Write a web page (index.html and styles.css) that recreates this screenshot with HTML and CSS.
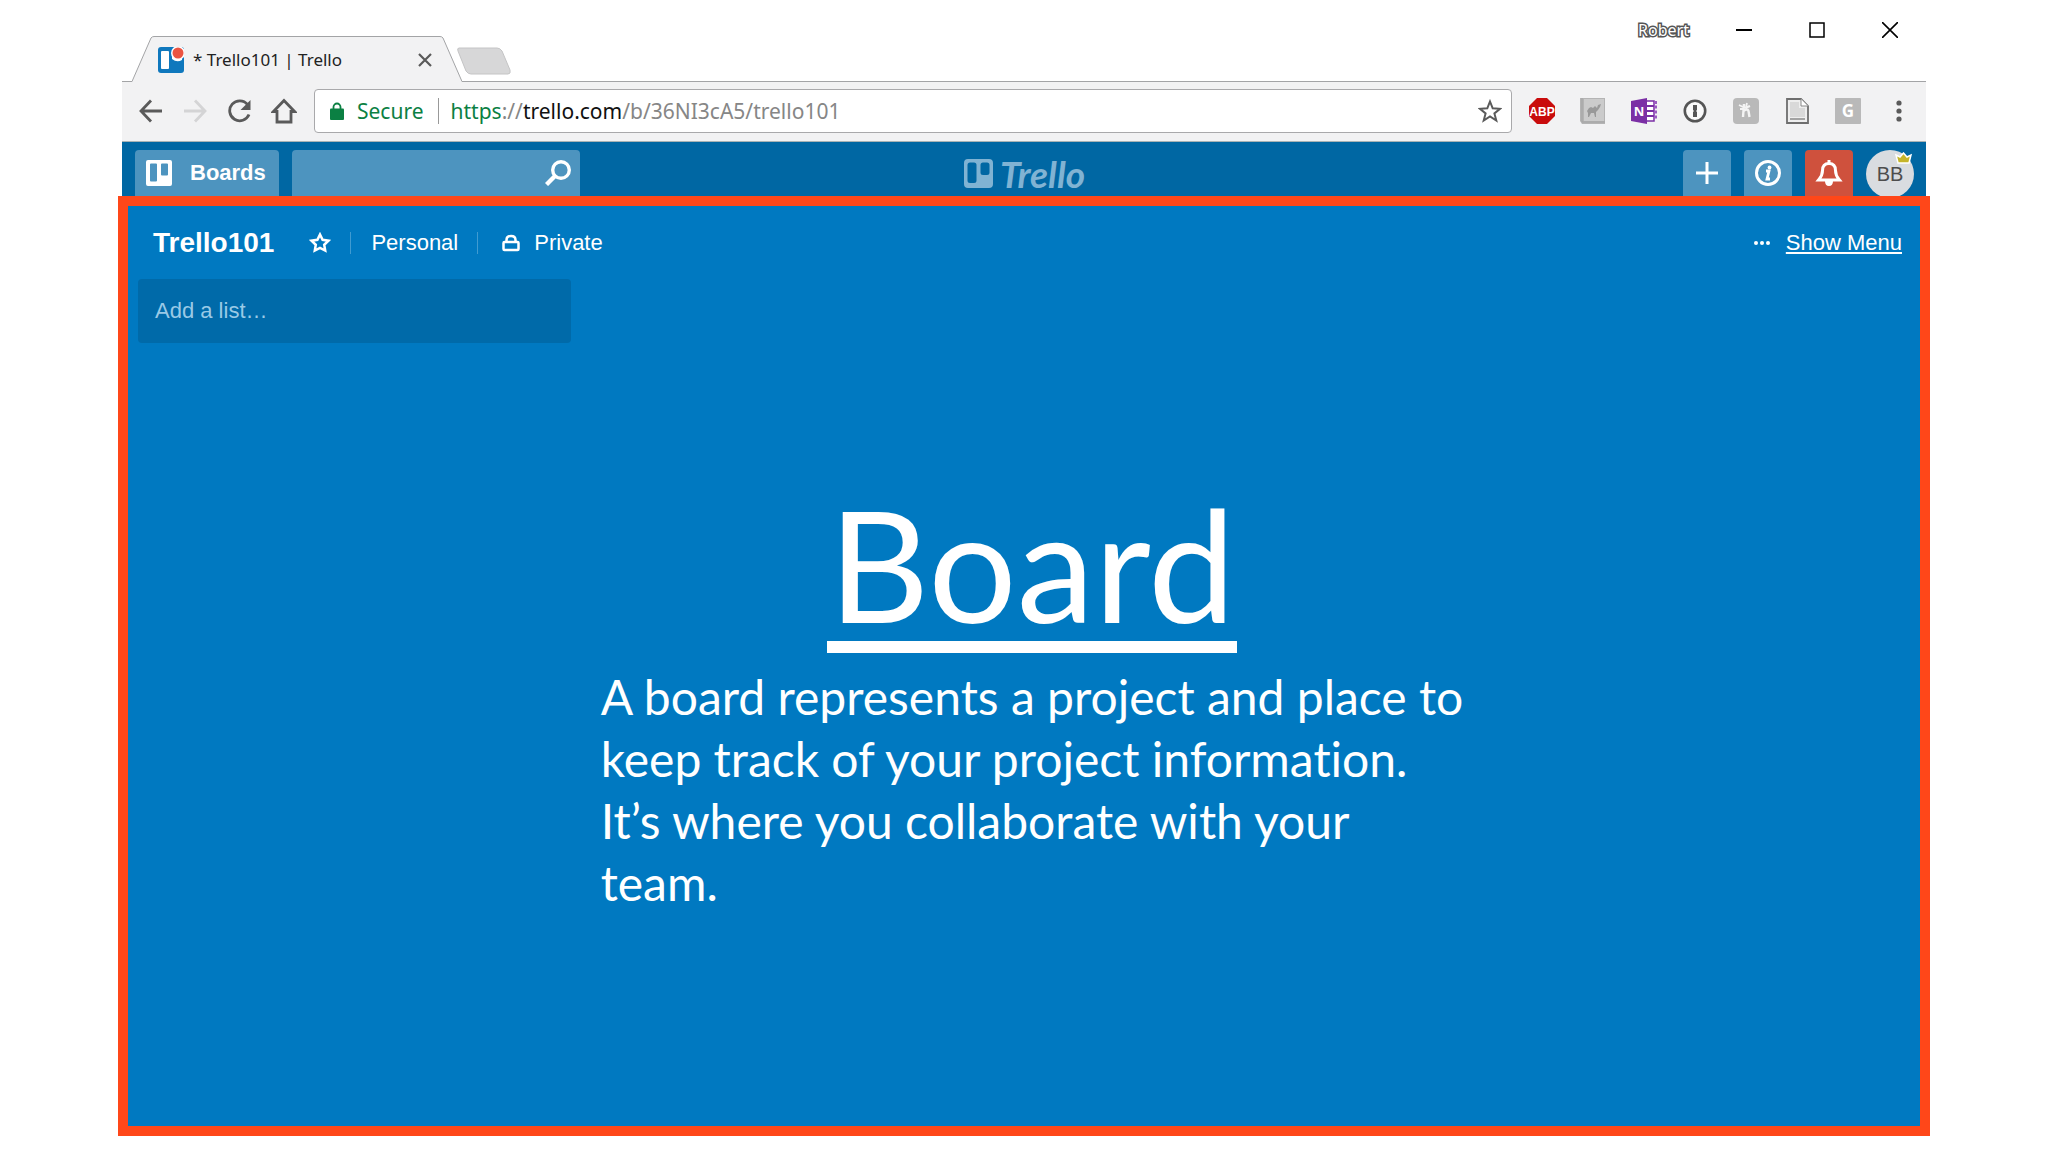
FILE: index.html
```
<!DOCTYPE html>
<html lang="en">

<head>
    <meta charset="UTF-8" />
    <meta name="viewport" content="width=device-width, initial-scale=1" />
    <title>Trello101 | Trello</title>
    <link rel="stylesheet" href="styles.css">
</head>

<body>
    <div class="browser">
        <div class="titlebar">
            <div class="tab">
                <svg class="tab-edge" width="22" height="46" viewBox="0 0 22 46">
                    <path d="M0 46V45.500L19 2Q20 .5 22 .5V46z" fill="#f2f2f3" />
                    <path d="M0 45.500L19 2Q20 .5 22 .5" fill="none" stroke="#a3a4a6" />
                </svg>
                <div class="tab-body">
                    <svg width="26" height="26" viewBox="0 0 26 26">
                        <rect width="26" height="26" rx="3" fill="#0f78bd" />
                        <rect x="3" y="4" width="8" height="18" rx="1" fill="#fff" />
                        <path d="M14 4h10v9q-5 3-10-1z" fill="#fff" />
                        <circle cx="20" cy="6" r="7" fill="#fff" />
                        <circle cx="20" cy="6" r="5.500" fill="#eb5442" />
                    </svg>
                    <span class="tab-title">* Trello101 | Trello</span>
                    <button class="icon-button" aria-label="Close tab">
                        <svg width="14" height="14" viewBox="0 0 14 14">
                            <path d="M1 1l12 12M13 1L1 13" stroke="#5a5a5a" stroke-width="2.200" />
                        </svg>
                    </button>
                </div>
                <svg class="tab-edge" width="22" height="46" viewBox="0 0 22 46">
                    <path d="M22 46V45.500L3 2Q2 .5 0 .5V46z" fill="#f2f2f3" />
                    <path d="M22 45.500L3 2Q2 .5 0 .5" fill="none" stroke="#a3a4a6" />
                </svg>
            </div>
            <button class="icon-button new-tab" aria-label="New tab">
                <svg width="56" height="28" viewBox="0 0 56 28">
                    <path d="M3 1h38q3 0 5 3l8 19q1 4-2 4H15q-3 0-5-3L2 4q-1-3 1-3z" fill="#d7d7d8" stroke="#c4c4c5" />
                </svg>
            </button>
            <div class="window-controls">
                <span class="profile">Robert</span>
                <button aria-label="Minimize">
                    <svg width="16" height="16" viewBox="0 0 16 16"><path d="M0 8h16" stroke="#000" stroke-width="2" /></svg>
                </button>
                <button aria-label="Maximize">
                    <svg width="16" height="16" viewBox="0 0 16 16"><path d="M1 1h14v14H1z" fill="none" stroke="#000" stroke-width="1.500" /></svg>
                </button>
                <button aria-label="Close">
                    <svg width="16" height="16" viewBox="0 0 16 16"><path d="M0 0l16 16M16 0L0 16" stroke="#000" stroke-width="1.600" /></svg>
                </button>
            </div>
        </div>

        <div class="toolbar">
            <div class="nav">
                <button class="icon-button" aria-label="Back">
                    <svg width="24" height="24" viewBox="0 0 24 24"><path d="M23 12H2.500M12 1.500L2 12l10 10.500" fill="none" stroke="#5a5a5a" stroke-width="2.800" /></svg>
                </button>
                <button class="icon-button" aria-label="Forward">
                    <svg width="24" height="24" viewBox="0 0 24 24"><path d="M1 12h20.500M12 1.500L22 12 12 22.500" fill="none" stroke="#d4d4d5" stroke-width="2.800" /></svg>
                </button>
                <button class="icon-button" aria-label="Reload">
                    <svg width="24" height="24" viewBox="0 0 24 24">
                        <path d="M20.500 5.500A10 10 0 1 0 22 15.500" fill="none" stroke="#5a5a5a" stroke-width="2.800" />
                        <path d="M23.500 1v10h-10z" fill="#5a5a5a" />
                    </svg>
                </button>
                <button class="icon-button" aria-label="Home">
                    <svg width="26" height="26" viewBox="0 0 26 26"><path d="M13 2.500L2.500 13.500H6V24h14V13.500h3.500z" fill="none" stroke="#5a5a5a" stroke-width="2.800" /></svg>
                </button>
            </div>
            <div class="omnibox">
                <svg width="14" height="18" viewBox="0 0 14 18">
                    <path d="M3.500 8V5a3.500 3.500 0 0 1 7 0v3" fill="none" stroke="#0b8043" stroke-width="1.800" />
                    <rect y="6.500" width="14" height="11.500" rx="1" fill="#0b8043" />
                </svg>
                <span class="secure">Secure</span>
                <span class="divider"></span>
                <div class="url" role="textbox" aria-label="Address" contenteditable="true" spellcheck="false"><span class="scheme">https</span>://<span class="host">trello.com</span>/b/36NI3cA5/trello101</div>
                <button class="icon-button" aria-label="Bookmark this page">
                    <svg width="24" height="24" viewBox="0 0 24 24"><path d="M12 2.500l2.700 6.800 7.300.5-5.600 4.600 1.900 7.100L12 17.500l-6.300 4 1.900-7.100L2 9.800l7.300-.5z" fill="none" stroke="#5a5a5a" stroke-width="2" /></svg>
                </button>
            </div>
            <div class="extensions">
                <button class="icon-button" aria-label="Adblock Plus">
                    <svg width="26" height="26" viewBox="0 0 26 26">
                        <path d="M8 0h10l8 8v10l-8 8H8l-8-8V8z" fill="#c90c0c" />
                        <text x="13" y="18" class="abp">ABP</text>
                    </svg>
                </button>
                <button class="icon-button" aria-label="Camel">
                    <svg width="26" height="26" viewBox="0 0 26 26">
                        <path d="M0 0h25v26H2L0 23z" fill="#b4b4b4" />
                        <path d="M4 1h20v22H4z" fill="#cbcbcb" />
                        <path d="M2 0v24h23" fill="none" stroke="#a4a4a4" />
                        <path d="M8 19v-4l-1-2 2-3 2-1 2 1 2-2 2 2 1-3 3-1-1 3-2 3-2 2v5h-1l-1-4h-3l-2 4z" fill="#999" />
                    </svg>
                </button>
                <button class="icon-button" aria-label="OneNote">
                    <svg width="26" height="26" viewBox="0 0 26 26">
                        <path d="M14 3h9v20h-9" fill="#fff" stroke="#7b2fa5" stroke-width="1.500" />
                        <path d="M16 8h7M16 13h7M16 18h7" stroke="#7b2fa5" stroke-width="2" />
                        <path d="M23 4.500h3M23 9h3M23 14h3M23 19h3" stroke="#9b5cc0" stroke-width="3" />
                        <path d="M0 3l16-3v26L0 23z" fill="#7b2fa5" />
                        <text x="8" y="18" class="onenote">N</text>
                    </svg>
                </button>
                <button class="icon-button" aria-label="1Password">
                    <svg width="26" height="26" viewBox="0 0 26 26">
                        <circle cx="13" cy="13" r="10.200" fill="#fafafa" stroke="#555" stroke-width="2.600" />
                        <path d="M11 7h4v5l-1 1 1 1v5h-4v-5l1-1-1-1z" fill="#555" />
                    </svg>
                </button>
                <button class="icon-button" aria-label="Honey">
                    <svg width="26" height="26" viewBox="0 0 26 26">
                        <rect width="26" height="26" rx="4" fill="#b9b9b9" />
                        <path d="M11 6l-1 13M10.500 13q4-3 5 0l1 6M12 10l5-2" fill="none" stroke="#f4f4f4" stroke-width="2.400" />
                        <path d="M6 7l4 2M14 5l-1 4M7 11h3" stroke="#f4f4f4" stroke-width="1.800" />
                    </svg>
                </button>
                <button class="icon-button" aria-label="Page notes">
                    <svg width="26" height="26" viewBox="0 0 26 26">
                        <path d="M3 1h14l7 7v17H3z" fill="#eee" stroke="#6e6e6e" stroke-width="1.800" />
                        <path d="M17 1v7h7" fill="#fff" stroke="#8a8a8a" />
                        <path d="M6 4h9v6h6v9H6z" fill="#d9d9d9" />
                        <path d="M6 21h15" stroke="#8a8a8a" stroke-width="1.500" />
                    </svg>
                </button>
                <button class="icon-button" aria-label="Grammarly">
                    <svg width="26" height="26" viewBox="0 0 26 26">
                        <rect width="26" height="26" rx="1" fill="#b9b9b9" />
                        <text x="13" y="19" class="grammarly">G</text>
                    </svg>
                </button>
                <button class="icon-button" aria-label="Menu">
                    <svg width="26" height="26" viewBox="0 0 26 26" fill="#5a5a5a">
                        <circle cx="13" cy="5" r="2.600" />
                        <circle cx="13" cy="13" r="2.600" />
                        <circle cx="13" cy="21" r="2.600" />
                    </svg>
                </button>
            </div>
        </div>

        <header class="header">
            <div class="header-left">
                <button class="header-button boards">
                    <svg width="26" height="26" viewBox="0 0 26 26">
                        <path fill-rule="evenodd" d="M2 0h22q2 0 2 2v22q0 2-2 2H2q-2 0-2-2V2q0-2 2-2zM5 3.500q-1 0-1 1v16q0 1 1 1h5q1 0 1-1v-16q0-1-1-1zM16 3.500q-1 0-1 1v10q0 1 1 1h5q1 0 1-1v-10q0-1-1-1z" fill="#fff" />
                    </svg>
                    Boards
                </button>
                <div class="search">
                    <input type="text" aria-label="Search">
                    <button class="icon-button" aria-label="Search">
                        <svg width="26" height="26" viewBox="0 0 26 26" fill="none" stroke="#fff">
                            <circle cx="16" cy="10" r="8.300" stroke-width="3.400" />
                            <path d="M10 16l-8.500 8.500" stroke-width="4.400" />
                        </svg>
                    </button>
                </div>
            </div>
            <a class="logo" href="#">
                <svg width="29" height="29" viewBox="0 0 29 29">
                    <path fill-rule="evenodd" d="M4 0h21q4 0 4 4v21q0 4-4 4H4q-4 0-4-4V4q0-4 4-4zM6 3.500q-2.500 0-2.500 2.500v15.500q0 2.500 2.500 2.500h4q2.500 0 2.500-2.500V6q0-2.500-2.500-2.500zM19 3.500q-2.500 0-2.500 2.500v7.500q0 2.500 2.500 2.500h4q2.500 0 2.500-2.500V6q0-2.500-2.500-2.500z" fill="#80b3d3" />
                </svg>
                <span>Trello</span>
            </a>
            <div class="header-right">
                <button class="header-button square" aria-label="Add">
                    <svg width="24" height="24" viewBox="0 0 24 24"><path d="M12 1v22M1 12h22" stroke="#fff" stroke-width="3" /></svg>
                </button>
                <button class="header-button square" aria-label="Information">
                    <svg width="28" height="28" viewBox="0 0 28 28">
                        <circle cx="14" cy="14" r="11.500" fill="none" stroke="#fff" stroke-width="3" />
                        <path d="M12 12h3l-2 8h3" fill="none" stroke="#fff" stroke-width="2.800" />
                        <circle cx="15.500" cy="8.500" r="1.900" fill="#fff" />
                    </svg>
                </button>
                <button class="header-button square alert" aria-label="Notifications">
                    <svg width="28" height="28" viewBox="0 0 28 28">
                        <path d="M14 4.500c-4.500 0-6.500 3-6.500 7 0 5-2 7-4 9.500h21c-2-2.500-4-4.500-4-9.500 0-4-2-7-6.500-7z" fill="none" stroke="#fff" stroke-width="3" />
                        <path d="M12.500 1h3v4h-3zM10 22h8q0 5-4 5t-4-5z" fill="#fff" />
                    </svg>
                </button>
                <button class="avatar">
                    BB
                    <svg class="crown" width="17" height="13" viewBox="0 0 17 13">
                        <path d="M1 3l4 2 3.500-4L12 5l4-2-2 8H3z" fill="#c5b52b" stroke="#fff" stroke-width="1.500" />
                    </svg>
                </button>
            </div>
        </header>
    </div>

    <main class="board">
        <div class="board-header">
            <h1>Trello101</h1>
            <button class="icon-button star" aria-label="Star board">
                <svg width="22" height="22" viewBox="0 0 22 22"><path d="M11 2.500l2.600 5.300 5.900.9-4.300 4.100 1 5.800L11 15.900l-5.200 2.700 1-5.800L2.500 8.700l5.900-.9z" fill="none" stroke="#fff" stroke-width="2.500" /></svg>
            </button>
            <span class="board-divider"></span>
            <a href="#">Personal</a>
            <span class="board-divider"></span>
            <a class="private" href="#">
                <svg width="18" height="18" viewBox="0 0 18 18" fill="none" stroke="#fff" stroke-width="2.500">
                    <path d="M4.500 8V6q0-4 4.500-4t4.500 4v2" />
                    <rect x="1.500" y="8" width="15" height="8" rx="1" />
                </svg>
                Private
            </a>
            <div class="show-menu">
                <svg width="18" height="6" viewBox="0 0 18 6" fill="#fff">
                    <circle cx="3" cy="3" r="2" />
                    <circle cx="9" cy="3" r="2" />
                    <circle cx="15" cy="3" r="2" />
                </svg>
                <a href="#">Show Menu</a>
            </div>
        </div>

        <button class="add-list">Add a list…</button>

        <section class="note">
            <h2>Board</h2>
            <p>A board represents a project and place to<br>
                keep track of your project information.<br>
                It’s where you collaborate with your<br>
                team.</p>
        </section>
    </main>
</body>

</html>
```
FILE: styles.css
```
* {
    box-sizing: border-box;
}

body {
    font-family: "Liberation Sans", Arial, sans-serif;
    background: #fff;
    display: flex;
    flex-direction: column;
    min-height: 100vh;
    margin: 0;
    padding: 0 118px 16px;
}

button {
    font-family: inherit;
    border: none;
    background: none;
    padding: 0;
    cursor: pointer;
}

svg {
    display: block;
    flex-shrink: 0;
}

.icon-button {
    display: flex;
    align-items: center;
    justify-content: center;
}

.browser {
    margin: 0 4px;
    font-family: "Noto Sans", "Segoe UI", sans-serif;
}

/* Title bar and tabs */
.titlebar {
    display: flex;
    align-items: flex-end;
    height: 82px;
    padding-left: 10px;
    border-bottom: 1px solid #a3a4a6;
}

.tab {
    display: flex;
    margin-bottom: -1px;
}

.tab-body {
    display: flex;
    align-items: center;
    width: 286px;
    height: 46px;
    padding: 0 8px 0 4px;
    border-top: 1px solid #a3a4a6;
    background: #f2f2f3;
}

.tab-title {
    flex: 1;
    margin-left: 9px;
    font-size: 17px;
    color: #222;
}

.new-tab {
    margin: 0 0 6px -6px;
}

.window-controls {
    display: flex;
    align-items: center;
    align-self: flex-start;
    height: 60px;
    margin-left: auto;
}

.window-controls button {
    display: flex;
    align-items: center;
    justify-content: center;
    width: 73px;
    height: 60px;
}

.profile {
    margin-right: 18px;
    font-size: 16px;
    color: #fff;
    -webkit-text-stroke: 3px #555;
    paint-order: stroke fill;
}

/* Address bar */
.toolbar {
    display: flex;
    align-items: center;
    height: 60px;
    padding: 0 14px 2px 17px;
    background: #f2f2f3;
    border-bottom: 1px solid #a9b3b5;
}

.nav {
    display: flex;
    align-items: center;
    gap: 20px;
}

.omnibox {
    display: flex;
    flex: 1;
    align-items: center;
    height: 44px;
    margin: 0 17px;
    padding: 0 9px 0 15px;
    background: #fff;
    border: 1px solid #a9a9ab;
    border-radius: 4px;
    font-size: 21px;
}

.secure {
    margin-left: 13px;
    color: #0b8043;
}

.divider {
    width: 1px;
    height: 26px;
    margin: 0 12px 0 14px;
    background: #999;
}

.url {
    flex: 1;
    color: #868686;
}

.scheme {
    color: #0b8043;
}

.host {
    color: #111;
}

.extensions {
    display: flex;
    gap: 25px;
}

.extensions text {
    fill: #fff;
    font-weight: bold;
    text-anchor: middle;
}

.abp {
    font-size: 12px;
    font-family: "Liberation Sans", Arial, sans-serif;
}

.onenote {
    font-size: 13px;
}

.grammarly {
    font-size: 17px;
}

/* Trello header */
.header {
    display: grid;
    grid-template-columns: 1fr auto 1fr;
    height: 54px;
    padding: 8px 12px 0 13px;
    background: #0067a3;
    font-family: "Liberation Sans", Arial, sans-serif;
}

.header-left {
    display: flex;
    gap: 13px;
}

.header-right {
    display: flex;
    justify-content: flex-end;
    gap: 13px;
}

.header-button,
.search {
    display: flex;
    align-items: center;
    height: 46px;
    background: #4d94bf;
    border-radius: 4px 4px 0 0;
}

.boards {
    gap: 18px;
    padding: 0 13px 0 11px;
    color: #fff;
    font-size: 22px;
    font-weight: bold;
}

.square {
    justify-content: center;
    width: 48px;
}

.alert {
    background: #cf513d;
}

.search {
    width: 288px;
    padding-right: 9px;
}

.search input {
    flex: 1;
    min-width: 0;
    height: 100%;
    padding: 0 12px;
    border: none;
    outline: none;
    background: none;
    color: #fff;
    font-size: 22px;
}

.logo {
    display: flex;
    align-items: center;
    gap: 7px;
    height: 46px;
    color: #80b3d3;
    font-family: Lato, sans-serif;
    font-size: 37px;
    font-style: italic;
    font-weight: bold;
    text-decoration: none;
}

.avatar {
    position: relative;
    width: 48px;
    height: 48px;
    border-radius: 50%;
    background: #d9dce0;
    color: #4d4d4d;
    font-size: 20px;
}

.crown {
    position: absolute;
    top: 2px;
    right: 2px;
}

/* Board */
.board {
    position: relative;
    flex: 1;
    border: 10px solid #ff4719;
    background: #0079c1;
    color: #fff;
}

.board-header {
    display: flex;
    align-items: center;
    height: 73px;
    padding: 0 18px 0 25px;
    font-size: 22px;
}

.board-header a {
    color: #fff;
    text-decoration: none;
}

.board-header h1 {
    margin: 0;
    font-size: 28px;
}

.star {
    margin-left: 35px;
}

.board-divider {
    width: 1px;
    height: 22px;
    margin: 0 20px 0 19px;
    background: #409bd1;
}

.private {
    display: flex;
    align-items: center;
    gap: 14px;
    margin-left: 4px;
}

.show-menu {
    display: flex;
    align-items: center;
    gap: 15px;
    margin-left: auto;
}

.board-header .show-menu a {
    text-decoration: underline;
}

.add-list {
    display: block;
    width: 433px;
    height: 64px;
    margin-left: 10px;
    padding: 0 17px;
    border-radius: 4px;
    background: #006aa9;
    color: #99c9e6;
    font-size: 22px;
    text-align: left;
}

.note {
    width: fit-content;
    margin: 145px auto 0;
    padding-left: 16px;
    font-family: Lato, Calibri, sans-serif;
    font-variant-ligatures: none;
}

.note h2 {
    width: fit-content;
    margin: 0 auto;
    padding: 0 2px 3px;
    border-bottom: 12px solid #fff;
    font-size: 156px;
    font-weight: normal;
    line-height: 150px;
}

.note p {
    margin: 13px 0 0;
    font-size: 48px;
    line-height: 62px;
}
```
